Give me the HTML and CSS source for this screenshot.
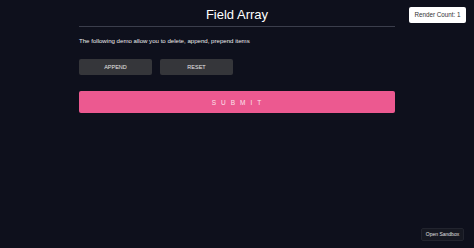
FILE: index.html
```html
<!DOCTYPE html>
<html>
<head>
<meta charset="utf-8">
<link rel="stylesheet" href="styles.css">
</head>
<body>
<div class="counter">Render Count: 1</div>
<main class="page">
  <h1 class="title">Field Array</h1>
  <hr class="rule">
  <p class="intro">The following demo allow you to delete, append, prepend items</p>
  <div class="actions">
    <button class="btn" type="button">APPEND</button>
    <button class="btn" type="button">RESET</button>
  </div>
  <button class="submit" type="submit">SUBMIT</button>
</main>
<a class="sandbox">Open Sandbox</a>
</body>
</html>
```
FILE: styles.css
```css
html, body {
  margin: 0;
  padding: 0;
  background: #0e101c;
  height: 100%;
}
body {
  font-family: "Liberation Sans", Arial, Helvetica, sans-serif;
  color: #ffffff;
}
.page {
  width: 316px;
  margin: 0 auto;
  display: flex;
  flex-direction: column;
  padding-top: 7px;
}
.title {
  margin: 0;
  font-size: 13px;
  font-weight: 400;
  line-height: 16px;
  text-align: center;
  color: #ffffff;
}
.rule {
  margin: 3px 0 0 0;
  border: none;
  border-top: 1px solid #3b3e4c;
  height: 0;
}
.intro {
  margin: 9px 0 0 0;
  font-size: 6.1px;
  line-height: 9px;
  color: #ececec;
}
.actions {
  display: flex;
  gap: 8px;
  margin-top: 14px;
}
.btn {
  width: 73px;
  height: 16px;
  padding: 0;
  border: none;
  border-radius: 2px;
  background: #35363a;
  color: #e6e6e6;
  font-family: "Liberation Sans", Arial, sans-serif;
  font-size: 5.5px;
  text-transform: uppercase;
}
.submit {
  margin-top: 16px;
  width: 316px;
  height: 22px;
  padding: 0 0 0 4px;
  border: none;
  border-radius: 2px;
  background: #ec5990;
  color: #fbe4ec;
  font-family: "Liberation Sans", Arial, sans-serif;
  font-size: 6.5px;
  letter-spacing: 5px;
  text-transform: uppercase;
}
.counter {
  position: fixed;
  top: 7px;
  right: 8px;
  width: 57px;
  height: 16px;
  background: #ffffff;
  color: #333333;
  border-radius: 2px;
  font-size: 6.3px;
  line-height: 16px;
  text-align: center;
}
.sandbox {
  position: fixed;
  bottom: 7px;
  right: 10px;
  width: 43px;
  height: 13px;
  background: #161821;
  border: 1px solid #22242e;
  box-sizing: border-box;
  border-radius: 2px;
  color: #e0e0e0;
  font-size: 5px;
  line-height: 11px;
  text-align: center;
}
```
